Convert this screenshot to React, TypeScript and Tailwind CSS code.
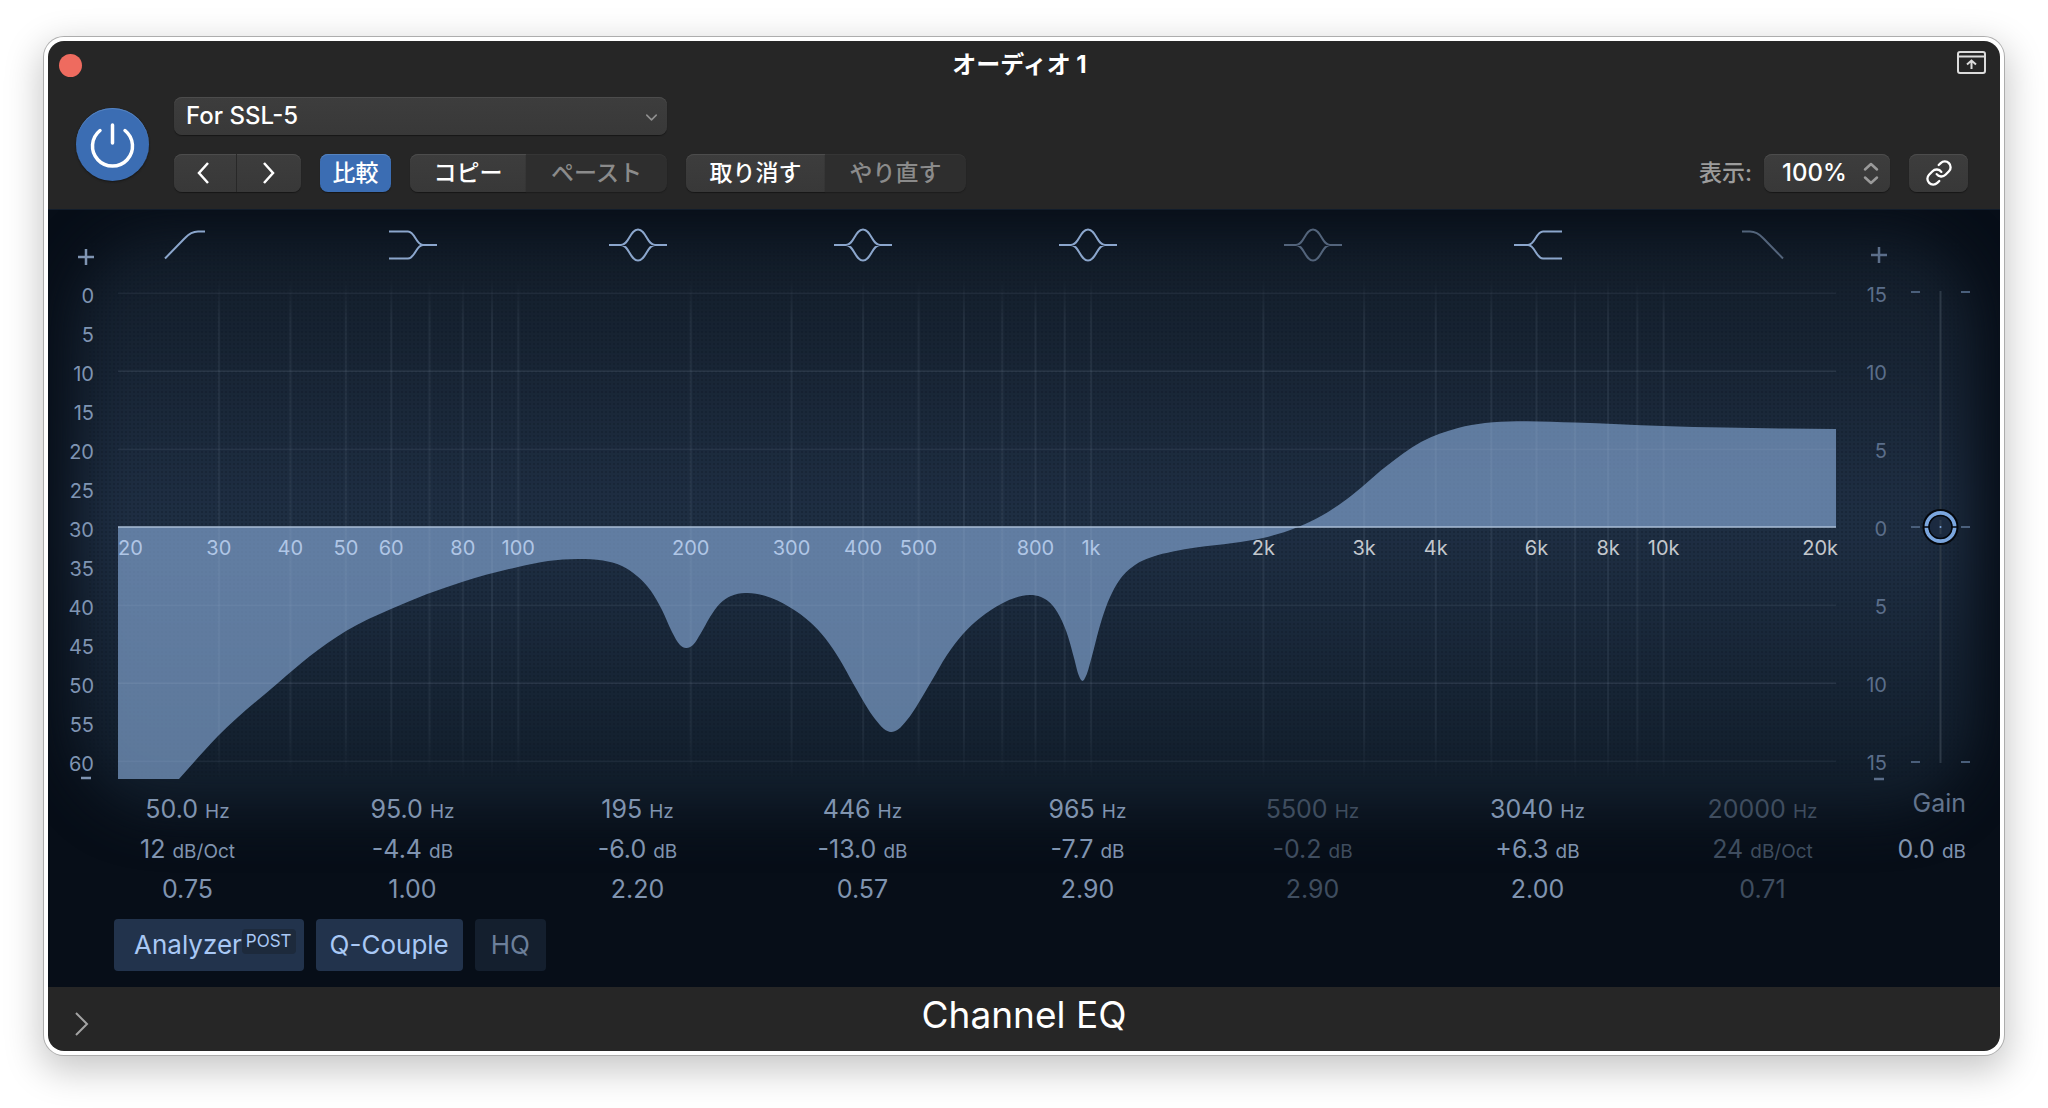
import { useState } from 'react'
import { ChevronDown, Link } from 'lucide-react'
import clsx from 'clsx'

type BandShape = 'lowcut' | 'lowshelf' | 'bell' | 'highshelf' | 'highcut'

interface Band {
  name: string
  shape: BandShape
  freq: string
  gain: string
  unit: string
  q: string
  on: boolean
}

const bands: Band[] = [
  { name: 'Low Cut', shape: 'lowcut', freq: '50.0', gain: '12', unit: 'dB/Oct', q: '0.75', on: true },
  { name: 'Low Shelf', shape: 'lowshelf', freq: '95.0', gain: '-4.4', unit: 'dB', q: '1.00', on: true },
  { name: 'Peak 1', shape: 'bell', freq: '195', gain: '-6.0', unit: 'dB', q: '2.20', on: true },
  { name: 'Peak 2', shape: 'bell', freq: '446', gain: '-13.0', unit: 'dB', q: '0.57', on: true },
  { name: 'Peak 3', shape: 'bell', freq: '965', gain: '-7.7', unit: 'dB', q: '2.90', on: true },
  { name: 'Peak 4', shape: 'bell', freq: '5500', gain: '-0.2', unit: 'dB', q: '2.90', on: false },
  { name: 'High Shelf', shape: 'highshelf', freq: '3040', gain: '+6.3', unit: 'dB', q: '2.00', on: true },
  { name: 'High Cut', shape: 'highcut', freq: '20000', gain: '24', unit: 'dB/Oct', q: '0.71', on: false },
]

const shapePaths: Record<BandShape, string> = {
  lowcut: 'M7 30.5 L27 10 Q33 3.5 40 3.5 H47',
  lowshelf: 'M6 3.5 H25 C32 3.5 33 17 40 17 H54 M6 30.5 H25 C32 30.5 33 17 40 17',
  bell: 'M1 17 H13 C21 17 22 1.5 30 1.5 S39 17 47 17 H59 M13 17 C21 17 22 32.5 30 32.5 S39 17 47 17',
  highshelf: 'M54 3.5 H35 C28 3.5 27 17 20 17 H6 M54 30.5 H35 C28 30.5 27 17 20 17',
  highcut: 'M9 3.5 H17 Q24 3.5 30 10 L50 30.5',
}

const PLOT_W = 1718
const PLOT_H = 500
const ZERO_Y = 248

// log scale, 20 Hz .. 20 kHz
const freqX = (hz: number) => (Math.log10(hz / 20) / 3) * PLOT_W

const gridFreqs = [
  30, 40, 50, 60, 70, 80, 90, 100, 200, 300, 400, 500, 600, 700, 800, 900,
  1000, 2000, 3000, 4000, 5000, 6000, 7000, 8000, 9000, 10000,
]
const gridRows = [14, 92, 170, 326, 404, 482]

const freqLabels: [number, string][] = [
  [30, '30'], [40, '40'], [50, '50'], [60, '60'], [80, '80'], [100, '100'],
  [200, '200'], [300, '300'], [400, '400'], [500, '500'], [800, '800'], [1000, '1k'],
  [2000, '2k'], [3000, '3k'], [4000, '4k'], [6000, '6k'], [8000, '8k'], [10000, '10k'],
]

const curve: [number, number][] = [
  [61, 500], [100, 457], [160, 404], [192, 377], [228, 352], [273, 330], [344, 303],
  [400, 288], [430, 282], [461, 280], [485, 281.5], [504, 287], [519, 297], [533, 312],
  [544, 331], [554, 353], [562, 366], [568, 369], [575, 366], [583, 354], [592, 338],
  [602, 324.5], [613, 317], [627, 314], [646, 316.5], [673, 329], [692, 343], [707, 359],
  [722, 381], [736, 406], [757, 440], [766, 450], [773, 453], [780, 450.5], [789, 441],
  [813, 403], [829, 376], [845, 355], [862, 339], [884, 324.5], [898, 318.5], [912, 316],
  [923, 318], [935, 327], [944, 342], [950, 357.5], [956, 379], [961, 397], [964.5, 402],
  [968, 397], [974, 377], [981, 350], [988, 328], [996, 310], [1005, 296.5], [1017, 286],
  [1034, 278], [1055, 272.5], [1078, 268.5], [1115, 264], [1145, 259], [1180, 248],
  [1204, 236.5], [1229, 220], [1268, 187.5], [1303, 163], [1340, 149], [1367, 144],
  [1399, 142.3], [1457, 143.5], [1545, 147], [1606, 148.6], [1666, 149.6], [1718, 150],
]

// cubic segments through the response points, tangents weighted by spacing
function smooth(pts: [number, number][]) {
  const slope = (i: number) => (pts[i + 1][1] - pts[i][1]) / (pts[i + 1][0] - pts[i][0])
  const tangents = pts.map((p, i) => {
    if (i === 0) return slope(0)
    if (i === pts.length - 1) return slope(i - 1)
    const before = p[0] - pts[i - 1][0]
    const after = pts[i + 1][0] - p[0]
    return (slope(i - 1) * after + slope(i) * before) / (before + after)
  })
  let d = ''
  for (let i = 0; i < pts.length - 1; i++) {
    const [x0, y0] = pts[i]
    const [x1, y1] = pts[i + 1]
    const h = (x1 - x0) / 3
    d += ` C${x0 + h} ${y0 + h * tangents[i]} ${x1 - h} ${y1 - h * tangents[i + 1]} ${x1} ${y1}`
  }
  return d
}

const areaPath = `M0 ${ZERO_Y} V${PLOT_H} H61${smooth(curve)} V${ZERO_Y} Z`

const controlBase = 'h-[38px] leading-[38px] font-medium text-white'
const raised = 'bg-linear-to-b from-[#3d3d3d] to-[#383838] shadow-[inset_0_1px_0_#4c4c4c,0_1px_1px_#171717]'
const sunken = 'h-[38px] leading-[38px] font-medium bg-[#2e2e2e] shadow-[inset_0_1px_0_#353535,0_1px_1px_#1d1d1d] text-[#8b8b8b]'

function Header() {
  const [power, setPower] = useState(true)

  return (
    <header className="bg-[#262626]">
      <div className="grid h-12 grid-cols-[1fr_auto_1fr] items-center pr-3 pl-[11px]">
        <button aria-label="閉じる" className="size-[23px] rounded-full bg-[#ee6b5f]" />
        <h1 className="pr-2 text-2xl leading-8 font-bold text-white">オーディオ 1</h1>
        <button aria-label="プラグインウインドウ" className="justify-self-end">
          <svg width="32" height="28" viewBox="0 0 32 28" fill="none" stroke="#dcdcdc" strokeWidth="2">
            <rect x="2" y="1" width="27" height="21" rx="2" />
            <path d="M2 5.5 H29" />
            <path d="M15.5 18 V10 M11 13.5 L15.5 9.5 L20 13.5" />
          </svg>
        </button>
      </div>

      <div className="flex items-center gap-[25px] pt-2 pr-8 pb-[17px] pl-7">
        <button
          aria-label="電源"
          aria-pressed={power}
          onClick={() => setPower(!power)}
          className="size-[73px] shrink-0 rounded-full bg-[#3b6db3] shadow-[inset_0_1px_0_#5583c0,0_1px_2px_#161616]"
        >
          <svg viewBox="0 0 73 73" fill="none" stroke="#fff" strokeWidth="3.5" strokeLinecap="round">
            <path d="M36.5 17 V35" />
            <path d="M24 22.5 A20 20 0 1 0 49 22.5" />
          </svg>
        </button>

        <div className="flex flex-col gap-[19px]">
          <div className="relative w-[493px]">
            <select
              aria-label="設定"
              className={clsx('w-full appearance-none rounded-lg pr-10 pl-3 text-2xl', controlBase, raised)}
            >
              <option>For SSL-5</option>
            </select>
            <ChevronDown className="pointer-events-none absolute top-[11px] right-[6px] size-[19px] text-[#8f8f8f]" />
          </div>

          <div className="flex gap-[19px] text-[23px]">
            <div className="flex">
              <button aria-label="前へ" className={clsx('flex w-[63px] items-center justify-center rounded-l-lg border-r border-[#2b2b2b] pr-1', controlBase, raised)}>
                <svg width="14" height="22" viewBox="0 0 14 22" fill="none" stroke="#fff" strokeWidth="2.5"><path d="M12 1 L3 11 L12 21" /></svg>
              </button>
              <button aria-label="次へ" className={clsx('flex w-[64px] items-center justify-center rounded-r-lg', controlBase, raised)}>
                <svg width="14" height="22" viewBox="0 0 14 22" fill="none" stroke="#fff" strokeWidth="2.5"><path d="M2 1 L11 11 L2 21" /></svg>
              </button>
            </div>
            <button className={clsx('w-[71px] rounded-lg bg-[#3b6db3] shadow-[inset_0_1px_0_#5583c0,0_1px_1px_#171717]', controlBase)}>
              比較
            </button>
            <div className="flex">
              <button className={clsx('w-[116px] rounded-l-lg', controlBase, raised)}>コピー</button>
              <button disabled className={clsx('w-[141px] rounded-r-lg', sunken)}>ペースト</button>
            </div>
            <div className="flex">
              <button className={clsx('w-[139px] rounded-l-lg', controlBase, raised)}>取り消す</button>
              <button disabled className={clsx('w-[141px] rounded-r-lg', sunken)}>やり直す</button>
            </div>
          </div>
        </div>

        <div className="ml-auto flex items-center gap-[19px] self-end">
          <div className="flex items-center gap-3">
            <label htmlFor="zoom" className="text-[23px] leading-[38px] font-medium text-[#9c9c9c]">表示:</label>
            <div className="relative">
              <select id="zoom" className={clsx('w-[126px] appearance-none rounded-lg pl-[18px] text-2xl', controlBase, raised)}>
                <option>100%</option>
              </select>
              <svg className="pointer-events-none absolute top-2 right-[10px]" width="18" height="23" viewBox="0 0 18 23" fill="none" stroke="#9a9a9a" strokeWidth="2.5" strokeLinecap="round" strokeLinejoin="round">
                <path d="M3 7.5 L9 2 L15 7.5 M3 15.5 L9 21 L15 15.5" />
              </svg>
            </div>
          </div>
          <button aria-label="リンク" className={clsx('flex w-[59px] items-center justify-center rounded-lg', controlBase, raised)}>
            <Link className="size-7" strokeWidth={2} />
          </button>
        </div>
      </div>
    </header>
  )
}

function ScaleButton({ label, plus }: { label: string; plus?: boolean }) {
  return (
    <button aria-label={label} className="block">
      <svg width="16" height={plus ? 16 : 4} viewBox={plus ? '0 0 16 16' : '0 0 16 4'} stroke="currentColor" strokeWidth="2.5">
        {plus ? <path d="M0 8 H16 M8 0 V16" /> : <path d="M3 2 H13" />}
      </svg>
    </button>
  )
}

function Plot() {
  return (
    <div className="relative h-[500px] flex-1 text-xl leading-6">
      <svg className="size-full" viewBox={`0 0 ${PLOT_W} ${PLOT_H}`} preserveAspectRatio="none">
        <defs>
          <linearGradient id="gridFade" x1="0" y1="0" x2="0" y2={PLOT_H} gradientUnits="userSpaceOnUse">
            <stop offset="0" stopColor="#b4c8dc" stopOpacity="0" />
            <stop offset="0.08" stopColor="#b4c8dc" stopOpacity="0.08" />
            <stop offset="0.9" stopColor="#b4c8dc" stopOpacity="0.07" />
            <stop offset="1" stopColor="#b4c8dc" stopOpacity="0" />
          </linearGradient>
        </defs>
        <path d={areaPath} fill="#82a4d0" fillOpacity="0.68" />
        {gridFreqs.map(hz => (
          <rect key={hz} x={freqX(hz) - 1} y="0" width="2" height={PLOT_H} fill="url(#gridFade)" />
        ))}
        {gridRows.map(y => (
          <rect key={y} x="0" y={y - 0.5} width={PLOT_W} height="1.5" fill="#b4c8dc" fillOpacity={y === 92 || y === 404 ? 0.12 : 0.07} />
        ))}
        <rect x="0" y={ZERO_Y - 1} width={PLOT_W} height="2" fill="#a9bdd6" fillOpacity="0.75" />
      </svg>
      <span className="absolute top-[257px] left-0 text-[#b0c6e6]">20</span>
      {freqLabels.map(([hz, label]) => (
        <span
          key={hz}
          className={clsx('absolute top-[257px] -translate-x-1/2', hz > 1000 ? 'text-[#c3c7cd]' : 'text-[#b0c6e6]')}
          style={{ left: `${(freqX(hz) / PLOT_W) * 100}%` }}
        >
          {label}
        </span>
      ))}
      <span className="absolute top-[257px] -right-0.5 text-[#c3c7cd]">20k</span>
    </div>
  )
}

function GainSlider() {
  const [gain, setGain] = useState(0)
  const y = 236 - gain * (235 / 15)

  return (
    <div className="relative mt-3 ml-6 h-[472px] w-[59px]">
      <svg width="59" height="472" viewBox="0 0 59 472" fill="none" className="overflow-visible">
        <path d="M29.5 0 V472" stroke="#2d3946" strokeWidth="2" />
        {[1, 236, 471].map(t => (
          <path key={t} d={`M0 ${t} H9 M50 ${t} H59`} stroke="#4a5f7b" strokeWidth="2" />
        ))}
        <circle cx="29.5" cy={y} r="18" fill="#04070c" />
        <circle cx="29.5" cy={y} r="14" fill="#1b2a40" stroke="#7ba6de" strokeWidth="4" />
        <circle cx="29.5" cy={y} r="11.5" stroke="#04070c" strokeWidth="1.5" />
        <path d={`M12 ${y} H19 M40 ${y} H47`} stroke="#04070c" strokeWidth="1.5" />
        <path d={`M29.5 ${y - 7} V${y + 7}`} stroke="#2d3a4c" strokeWidth="2" />
        <circle cx="29.5" cy={y} r="1" fill="#7ba6de" />
      </svg>
      <input
        id="gain"
        type="range"
        min={-15}
        max={15}
        step={0.1}
        value={gain}
        onChange={e => setGain(Number(e.target.value))}
        className="absolute inset-0 size-full opacity-0 [direction:rtl] [writing-mode:vertical-lr]"
      />
    </div>
  )
}

function Display() {
  return (
    <section className="relative overflow-hidden border-t border-[#121d2b] bg-[#070e18]">
      {/* backlit glow and dot texture */}
      <div className="absolute inset-x-7 top-6 bottom-44 rounded-[90px] bg-linear-to-b from-[#121c28] via-[#1f2f44] via-50% to-[#101c29] blur-[26px]" />
      <div className="absolute inset-x-10 top-8 bottom-52 bg-[radial-gradient(#0a142040_1px,transparent_1.5px)] bg-[size:4px_4px]" />

      <div className="relative">
        <div className="grid h-[69px] grid-cols-8 pr-[125px] pl-[27px]">
          {bands.map(b => (
            <button
              key={b.name}
              aria-label={b.name}
              aria-pressed={b.on}
              className={clsx('flex items-center justify-center', b.on ? 'text-[#8ba6cc]' : 'text-[#53647b]')}
            >
              <svg width="60" height="34" viewBox="0 0 60 34" fill="none" stroke="currentColor" strokeWidth="2">
                <path d={shapePaths[b.shape]} />
              </svg>
            </button>
          ))}
        </div>

        <div className="flex text-xl">
          <div className="-mt-[30px] flex w-[70px] flex-col items-end pr-6 text-[#7f94b2]">
            <ScaleButton plus label="アナライザーのスケールを上げる" />
            <ol className="mt-3 text-right leading-[39px]">
              {[0, 5, 10, 15, 20, 25, 30, 35, 40, 45, 50, 55, 60].map(n => (
                <li key={n}>{n}</li>
              ))}
            </ol>
            <div className="-mt-2">
              <ScaleButton label="アナライザーのスケールを下げる" />
            </div>
          </div>

          <Plot />

          <div className="flex w-[164px]">
            <div className="-mt-8 flex w-[51px] flex-col items-end text-[#5b6e8a]">
              <ScaleButton plus label="EQスケールを上げる" />
              <ol className="mt-[13px] flex flex-col gap-[39px] text-right leading-[39px]">
                {[15, 10, 5, 0, 5, 10, 15].map((n, i) => (
                  <li key={i}>{n}</li>
                ))}
              </ol>
              <div className="-mt-1.5">
                <ScaleButton label="EQスケールを下げる" />
              </div>
            </div>
            <GainSlider />
          </div>
        </div>

        <div className="flex pt-2 pl-[27px] text-[25px] leading-10">
          <div className="grid flex-1 grid-cols-8">
            {bands.map(b => (
              <div key={b.name} className={clsx('text-center', b.on ? 'text-[#8094b0]' : 'text-[#3f4d5f]')}>
                <p>{b.freq} <span className="text-[19px] leading-none">Hz</span></p>
                <p>{b.gain} <span className="text-[19px] leading-none">{b.unit}</span></p>
                <p>{b.q}</p>
              </div>
            ))}
          </div>
          <div className="-mt-1.5 flex w-[125px] flex-col gap-1.5 pr-[34px] text-right">
            <label htmlFor="gain" className="text-[#62748e]">Gain</label>
            <output htmlFor="gain" className="whitespace-nowrap text-[#8094b0]">0.0 <span className="text-[19px] leading-none">dB</span></output>
          </div>
        </div>

        <div className="flex gap-3 pt-[10px] pb-4 pl-[66px] text-[26px] leading-[52px]">
          <button className="flex rounded-sm bg-[#22334c] pr-2 pl-5 text-[#a9c8f5]">
            Analyzer
            <span className="mt-[10px] h-[25px] rounded-sm bg-[#1d2a3c] px-1 text-[17px] leading-[25px]">POST</span>
          </button>
          <button className="rounded-sm bg-[#22334c] px-[14px] text-[#a9c8f5]">Q-Couple</button>
          <button className="rounded-sm bg-[#141f2e] px-4 text-[#6c7f9a]">HQ</button>
        </div>
      </div>
    </section>
  )
}

export default function App() {
  return (
    <main className="min-h-screen bg-white px-11 pt-[37px] pb-[52px] font-['Inter','Noto_Sans_CJK_JP',sans-serif]">
      <div className="rounded-[20px] border-4 border-white bg-white shadow-[0_0_0_1px_#adadad,0_12px_36px_4px_rgba(0,0,0,0.22)]">
        <div className="overflow-hidden rounded-2xl">
          <Header />
          <Display />
          <footer className="grid h-16 grid-cols-[1fr_auto_1fr] items-center bg-[#262626] pl-[26px]">
            <button aria-label="詳細を表示" className="mt-2.5 justify-self-start">
              <svg width="16" height="24" viewBox="0 0 16 24" fill="none" stroke="#a3a3a3" strokeWidth="2"><path d="M2 1 L13 12 L2 23" /></svg>
            </button>
            <h2 className="pr-[26px] pb-2 text-[37px] leading-[48px] text-white">Channel EQ</h2>
          </footer>
        </div>
      </div>
    </main>
  )
}
